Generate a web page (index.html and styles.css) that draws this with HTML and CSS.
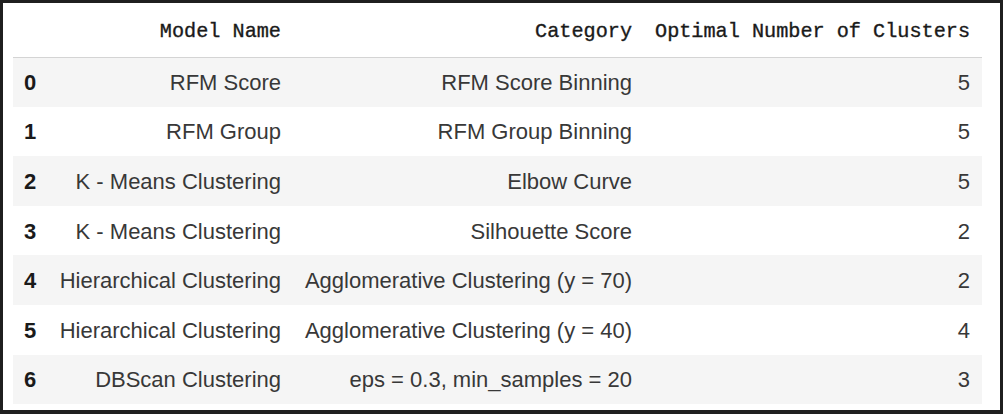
FILE: index.html
```html
<!DOCTYPE html>
<html>
<head>
<meta charset="utf-8">
<link rel="stylesheet" href="styles.css">
</head>
<body>
<div class="frame">
  <table class="df">
    <colgroup>
      <col class="c0"><col class="c1"><col class="c2"><col class="c3">
    </colgroup>
    <thead>
      <tr><th></th><th>Model Name</th><th>Category</th><th class="last">Optimal Number of Clusters</th></tr>
    </thead>
    <tbody>
      <tr><th>0</th><td>RFM Score</td><td>RFM Score Binning</td><td class="last">5</td></tr>
      <tr><th>1</th><td>RFM Group</td><td>RFM Group Binning</td><td class="last">5</td></tr>
      <tr><th>2</th><td>K - Means Clustering</td><td>Elbow Curve</td><td class="last">5</td></tr>
      <tr><th>3</th><td>K - Means Clustering</td><td>Silhouette Score</td><td class="last">2</td></tr>
      <tr><th>4</th><td>Hierarchical Clustering</td><td>Agglomerative Clustering (y = 70)</td><td class="last">2</td></tr>
      <tr><th>5</th><td>Hierarchical Clustering</td><td>Agglomerative Clustering (y = 40)</td><td class="last">4</td></tr>
      <tr><th>6</th><td>DBScan Clustering</td><td>eps = 0.3, min_samples = 20</td><td class="last">3</td></tr>
    </tbody>
  </table>
</div>
</body>
</html>
```
FILE: styles.css
```css
html, body { margin: 0; padding: 0; background: #ffffff; }
.frame {
  box-sizing: border-box;
  width: 1003px;
  height: 414px;
  border: 3px solid #1f1f1f;
  border-bottom-width: 4px;
  background: #ffffff;
  padding-left: 10px;
}
.df {
  border-collapse: collapse;
  table-layout: fixed;
  width: 969px;
  font-family: "Liberation Sans", Arial, sans-serif;
  font-size: 22px;
  color: #383838;
}
.c0 { width: 34px; }
.c1 { width: 245px; }
.c2 { width: 351px; }
.c3 { width: 339px; }
.df th, .df td {
  padding: 2px 11px 0 11px;
  text-align: right;
  white-space: nowrap;
  vertical-align: middle;
}
.df thead th {
  height: 54px;
  font-family: "Liberation Mono", "DejaVu Sans Mono", monospace;
  font-size: 20.2px;
  font-weight: normal;
  color: #1a1a1a;
  border-bottom: 1px solid #d4d4d4;
  padding-top: 4px;
  box-sizing: border-box;
  -webkit-text-stroke: 0.35px #1a1a1a;
}
.df tbody tr { height: 49.6px; }
.df tbody tr:nth-child(odd) { background: #f5f5f5; }
.df tbody th {
  text-align: left;
  font-weight: bold;
  color: #1a1a1a;
  padding-left: 11px;
}
.df .last { padding-right: 12px; }
```
